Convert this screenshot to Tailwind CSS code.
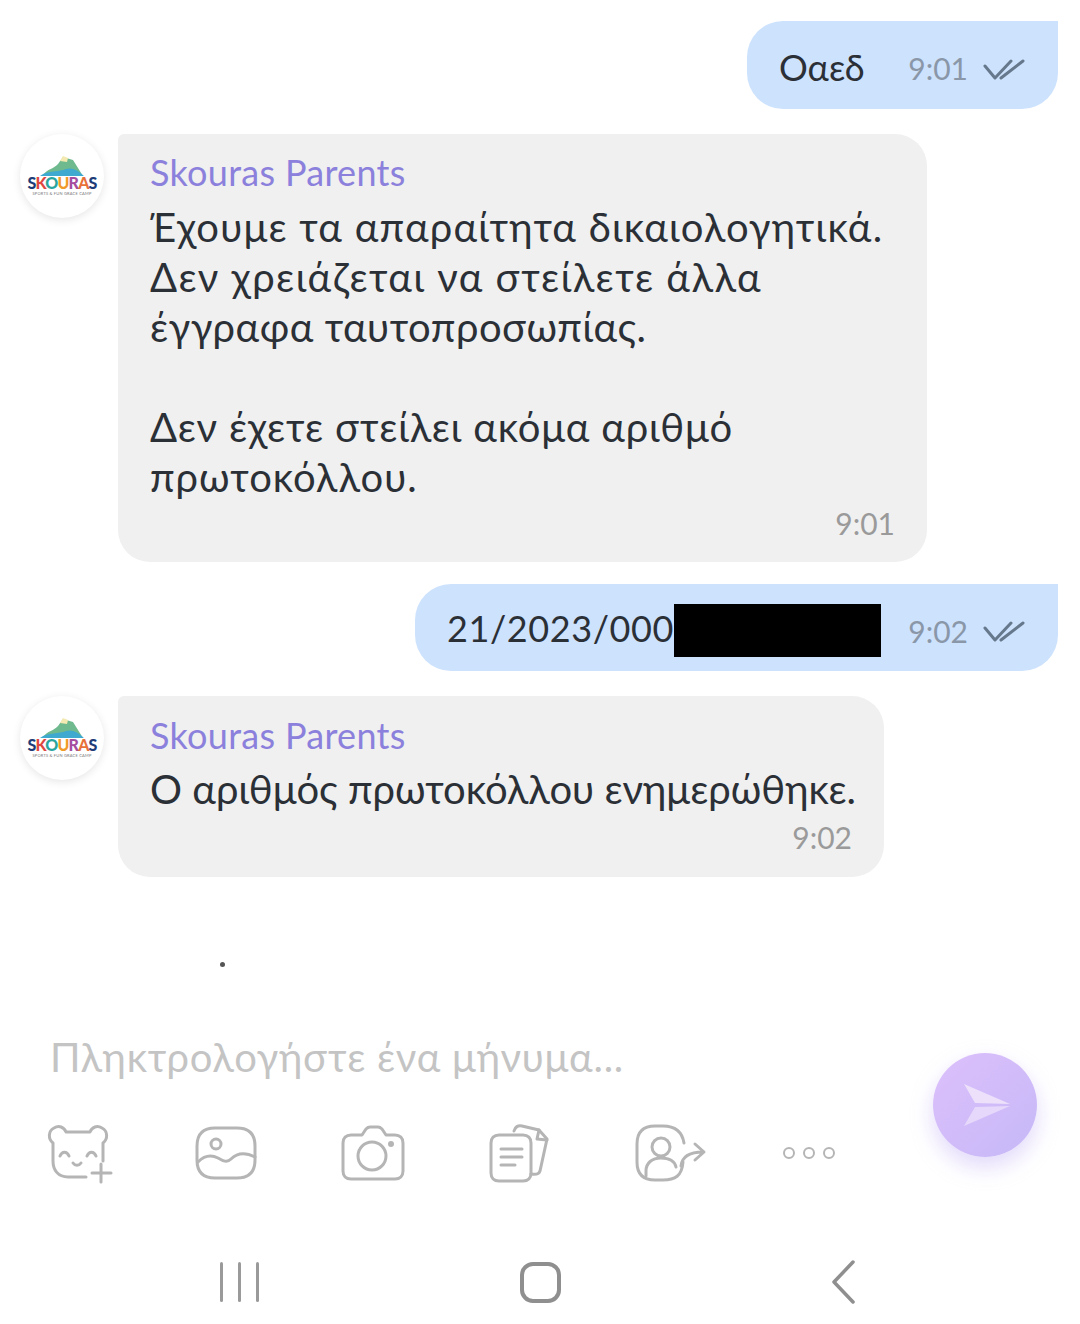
<!DOCTYPE html>
<html lang="el">
<head>
  <meta charset="UTF-8" />
  <meta name="viewport" content="width=device-width, initial-scale=1.0" />
  <title>Skouras Parents</title>
  <script src="https://cdn.jsdelivr.net/npm/@tailwindcss/browser@4"></script>
</head>
<body class="bg-white text-[#2b2f36] font-['Lato','Noto_Sans',sans-serif] w-[1080px] h-[1324px] overflow-hidden flex flex-col">

  <!-- Μηνύματα -->
  <div class="pt-[21px] pl-5 pr-[22px] flex flex-col h-[1030px]">

    <div class="self-end w-[311px] h-[88px] bg-[#cde2fd] rounded-[36px] rounded-tr-none pl-8 pr-[33px] flex items-center justify-between">
      <span class="text-[36px] pt-[4px]">Οαεδ</span>
      <div class="flex items-center gap-[15px] pt-[7px]">
        <span class="text-[30px] text-[#8a97a8]">9:01</span>
        <svg class="w-[42px] h-6" viewBox="0 0 42 24" fill="none" stroke="#66788c" stroke-width="3" stroke-linecap="round" stroke-linejoin="round"><path d="M2 9l10 12L28 4M18 21L40 4"/></svg>
      </div>
    </div>

    <div class="flex items-start gap-[14px] mt-[25px]">
      <div class="w-[84px] h-[84px] rounded-full bg-white shadow-[0_2px_8px_rgba(0,0,0,0.1)] flex flex-col items-center justify-center shrink-0">
        <svg class="w-[44px] h-[21px] -mb-[2px]" viewBox="0 0 44 21"><path d="M2 21C8 13 14 14 18 9L23 2 33 5 43 21Z" fill="#6fb98f"/><path d="M0 21c8-6 20-4 26-7 6-2 12 1 18 7z" fill="#3fa9d0"/><path d="M20 6l3-5 5 2-1 4z" fill="#f4e9b0"/></svg>
        <span class="text-[16px] font-black leading-[17px] tracking-[-0.8px]"><span class="text-[#1d3c78]">S</span><span class="text-[#e0483f]">K</span><span class="text-[#2aa6a0]">O</span><span class="text-[#f09a2a]">U</span><span class="text-[#a54ea0]">R</span><span class="text-[#e8713a]">A</span><span class="text-[#1d3c78]">S</span></span>
        <span class="text-[4px] leading-[6px] text-[#7a7a7a] tracking-[0.2px]">SPORTS &amp; FUN GRACE CAMP</span>
      </div>
      <div class="w-[809px] h-[428px] bg-[#f0f0f0] rounded-[32px] rounded-tl-[6px] pl-8 pr-8 pt-[13px] flex flex-col">
        <p class="text-[36px] leading-[50px] tracking-[0.3px] text-[#8b80dc]">Skouras Parents</p>
        <div class="text-[40px] leading-[50px] mt-[5px] whitespace-nowrap">
          <p class="tracking-[1.2px]">Έχουμε τα απαραίτητα δικαιολογητικά.</p>
          <p class="tracking-[1.45px]">Δεν χρειάζεται να στείλετε άλλα</p>
          <p class="tracking-[0.5px]">έγγραφα ταυτοπροσωπίας.</p>
          <p class="tracking-[0.8px] mt-[50px]">Δεν έχετε στείλει ακόμα αριθμό</p>
          <p class="tracking-[1px]">πρωτοκόλλου.</p>
        </div>
        <p class="text-[30px] leading-9 text-right text-[#9a9a9a] mt-[3px]">9:01</p>
      </div>
    </div>

    <div class="self-end w-[643px] h-[87px] mt-[22px] bg-[#cde2fd] rounded-[36px] rounded-tr-none pl-8 pr-[33px] flex items-center justify-between">
      <div class="flex items-center">
        <span class="text-[36px] tracking-[0.6px] w-[227px] whitespace-nowrap">21/2023/000</span>
        <div class="w-[207px] h-[53px] mt-[6px] bg-black"></div>
      </div>
      <div class="flex items-center gap-[15px] pt-[7px]">
        <span class="text-[30px] text-[#8a97a8]">9:02</span>
        <svg class="w-[42px] h-6" viewBox="0 0 42 24" fill="none" stroke="#66788c" stroke-width="3" stroke-linecap="round" stroke-linejoin="round"><path d="M2 9l10 12L28 4M18 21L40 4"/></svg>
      </div>
    </div>

    <div class="flex items-start gap-[14px] mt-[25px]">
      <div class="w-[84px] h-[84px] rounded-full bg-white shadow-[0_2px_8px_rgba(0,0,0,0.1)] flex flex-col items-center justify-center shrink-0">
        <svg class="w-[44px] h-[21px] -mb-[2px]" viewBox="0 0 44 21"><path d="M2 21C8 13 14 14 18 9L23 2 33 5 43 21Z" fill="#6fb98f"/><path d="M0 21c8-6 20-4 26-7 6-2 12 1 18 7z" fill="#3fa9d0"/><path d="M20 6l3-5 5 2-1 4z" fill="#f4e9b0"/></svg>
        <span class="text-[16px] font-black leading-[17px] tracking-[-0.8px]"><span class="text-[#1d3c78]">S</span><span class="text-[#e0483f]">K</span><span class="text-[#2aa6a0]">O</span><span class="text-[#f09a2a]">U</span><span class="text-[#a54ea0]">R</span><span class="text-[#e8713a]">A</span><span class="text-[#1d3c78]">S</span></span>
        <span class="text-[4px] leading-[6px] text-[#7a7a7a] tracking-[0.2px]">SPORTS &amp; FUN GRACE CAMP</span>
      </div>
      <div class="w-[766px] h-[181px] bg-[#f0f0f0] rounded-[32px] rounded-tl-[6px] pl-8 pr-8 pt-[14px] flex flex-col">
        <p class="text-[36px] leading-[50px] tracking-[0.3px] text-[#8b80dc]">Skouras Parents</p>
        <p class="text-[40px] leading-[50px] mt-[4px] whitespace-nowrap">Ο αριθμός πρωτοκόλλου ενημερώθηκε.</p>
        <p class="text-[30px] leading-9 text-right text-[#9a9a9a] mt-[5px]">9:02</p>
      </div>
    </div>

    <div class="w-[5px] h-[5px] rounded-full bg-[#555] ml-[200px] mt-[85px]"></div>
  </div>

  <!-- Mesaj yazma alanı -->
  <div class="relative h-[210px] pl-[50px]">
    <p class="text-[40px] leading-[50px] tracking-[0.75px] text-[#c4c4c4] whitespace-nowrap mt-[2px]">Πληκτρολογήστε ένα μήνυμα...</p>

    <div class="flex items-center mt-[40px] -ml-[4px] text-[#b5b5b5]">
      <svg class="w-[68px] h-[62px]" viewBox="0 0 68 62" fill="none" stroke="currentColor" stroke-width="3" stroke-linecap="round" stroke-linejoin="round"><path d="M40 55H22C12 55 7 48 7 39V21C2 17 2 9 8 6c5-3 10-1 12 4h24c2-5 7-7 12-4 6 3 6 11 1 15v18"/><path d="M14 34c2-5 7-5 9 0M41 34c2-5 7-5 9 0M27 41c2 3 6 3 8 0"/><path d="M55 42v18M46 51h19"/></svg>
      <svg class="w-[62px] h-[54px] ml-[81px]" viewBox="0 0 62 54" fill="none" stroke="currentColor" stroke-width="3" stroke-linecap="round" stroke-linejoin="round"><path d="M20 2h22c12 0 18 6 18 18v14c0 12-6 18-18 18H20C8 52 2 46 2 34V20C2 8 8 2 20 2Z"/><circle cx="21" cy="18" r="5"/><path d="M3 36c6-6 12-8 20-4 5 3 9 5 13 1 6-6 14-7 24-2"/></svg>
      <svg class="w-[64px] h-[56px] ml-[84px]" viewBox="0 0 64 56" fill="none" stroke="currentColor" stroke-width="3" stroke-linecap="round" stroke-linejoin="round"><path d="M10 10h11l4-6c1-1 2-2 4-2h8c2 0 3 1 4 2l4 6h9c5 0 8 3 8 8v28c0 5-3 8-8 8H10c-5 0-8-3-8-8V18c0-5 3-8 8-8Z"/><circle cx="31" cy="31" r="14"/><circle cx="50" cy="19" r="1.5"/></svg>
      <svg class="w-[62px] h-[60px] ml-[83px]" viewBox="0 0 62 60" fill="none" stroke="currentColor" stroke-width="3" stroke-linecap="round" stroke-linejoin="round"><path d="M11 12h24c5 0 8 3 8 8v30c0 5-3 8-8 8H11c-5 0-8-3-8-8V20c0-5 3-8 8-8Z"/><path d="M13 26h21M13 34h21M13 42h14"/><path d="M26 8c1-4 4-6 8-5l17 4 8 9-7 32c-1 3-3 4-9 3"/><path d="M51 7l-2 9 10 1"/></svg>
      <svg class="w-[72px] h-[58px] ml-[85px]" viewBox="0 0 72 58" fill="none" stroke="currentColor" stroke-width="3" stroke-linecap="round" stroke-linejoin="round"><path d="M49 19C47 7 40 2 28 2H20C8 2 2 8 2 20v18c0 12 6 18 18 18h8c12 0 19-4 20-18"/><circle cx="26" cy="23" r="9"/><path d="M11 52V47c0-8 6-13 15-13s14 4 15 9"/><path d="M46 42c1-9 7-14 22-14M60 20l9 8-9 8"/></svg>
      <div class="flex items-center gap-2 ml-[76px]">
        <span class="w-3 h-3 rounded-full border-2 border-[#b5b5b5]"></span>
        <span class="w-3 h-3 rounded-full border-2 border-[#b5b5b5]"></span>
        <span class="w-3 h-3 rounded-full border-2 border-[#b5b5b5]"></span>
      </div>
    </div>

    <!-- Gönder butonu -->
    <div class="absolute left-[933px] top-[23px] w-[104px] h-[104px] rounded-full bg-gradient-to-br from-[#dcc0fb] to-[#c6b8f7] shadow-[0_10px_22px_rgba(190,170,245,0.45)] flex items-center justify-center">
      <svg class="w-[50px] h-[46px] ml-[2px]" viewBox="0 0 50 46"><path d="M3 2l46 20L14 21Z" fill="#ece0fb"/><path d="M3 44l46-20-35 1Z" fill="#e6d8fb"/></svg>
    </div>
  </div>

  <!-- Alt gezinme çubuğu -->
  <div class="flex-1 flex items-center">
    <div class="flex gap-[15px] ml-[220px]">
      <span class="w-[3px] h-[40px] bg-[#9a9a9a] rounded-full"></span>
      <span class="w-[3px] h-[40px] bg-[#9a9a9a] rounded-full"></span>
      <span class="w-[3px] h-[40px] bg-[#9a9a9a] rounded-full"></span>
    </div>
    <div class="w-[41px] h-[41px] border-[4px] border-[#8f8f8f] rounded-[13px] ml-[261px]"></div>
    <svg class="w-6 h-[44px] ml-[270px]" viewBox="0 0 24 44" fill="none" stroke="#8f8f8f" stroke-width="3.5" stroke-linecap="round" stroke-linejoin="round"><path d="M22 2L3 22l19 20"/></svg>
  </div>
</body>
</html>
